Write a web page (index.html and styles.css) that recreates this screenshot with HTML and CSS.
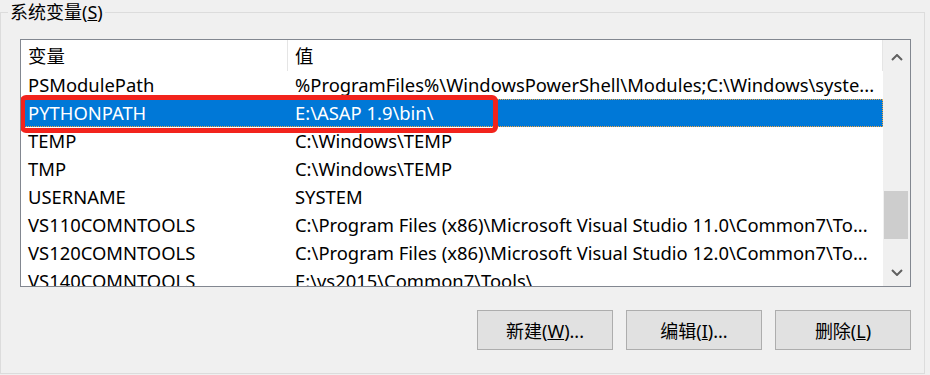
FILE: index.html
```html
<!DOCTYPE html>
<html lang="zh-CN">
<head>
  <meta charset="UTF-8">
  <meta name="viewport" content="width=device-width, initial-scale=1.0">
  <title>系统变量</title>
  <link rel="stylesheet" href="styles.css">
</head>
<body>
  <fieldset class="group">
    <legend>系统变量(<u>S</u>)</legend>

    <div class="list">
      <div class="table">
        <div class="head">
          <div class="hcell name">变量</div>
          <div class="hcell value">值</div>
        </div>
        <div class="row">
          <div class="cell">PSModulePath</div>
          <div class="cell val">%ProgramFiles%\WindowsPowerShell\Modules;C:\Windows\syste...</div>
        </div>
        <div class="row selected">
          <div class="cell">PYTHONPATH</div>
          <div class="cell val">E:\ASAP 1.9\bin\</div>
          <div class="mark"></div>
        </div>
        <div class="row">
          <div class="cell">TEMP</div>
          <div class="cell val">C:\Windows\TEMP</div>
        </div>
        <div class="row">
          <div class="cell">TMP</div>
          <div class="cell val">C:\Windows\TEMP</div>
        </div>
        <div class="row">
          <div class="cell">USERNAME</div>
          <div class="cell val">SYSTEM</div>
        </div>
        <div class="row">
          <div class="cell">VS110COMNTOOLS</div>
          <div class="cell val">C:\Program Files (x86)\Microsoft Visual Studio 11.0\Common7\To...</div>
        </div>
        <div class="row">
          <div class="cell">VS120COMNTOOLS</div>
          <div class="cell val">C:\Program Files (x86)\Microsoft Visual Studio 12.0\Common7\To...</div>
        </div>
        <div class="row">
          <div class="cell">VS140COMNTOOLS</div>
          <div class="cell val">E:\vs2015\Common7\Tools\</div>
        </div>
      </div>

      <div class="scrollbar">
        <div class="sb-btn up">
          <svg width="12" height="7" viewBox="0 0 12 7"><polyline points="1,6 6,1 11,6" fill="none" stroke="#606060" stroke-width="2"/></svg>
        </div>
        <div class="sb-track">
          <div class="sb-thumb"></div>
        </div>
        <div class="sb-btn down">
          <svg width="12" height="7" viewBox="0 0 12 7"><polyline points="1,1 6,6 11,1" fill="none" stroke="#606060" stroke-width="2"/></svg>
        </div>
      </div>
    </div>

    <div class="actions">
      <button>新建(<u>W</u>)...</button>
      <button>编辑(<u>I</u>)...</button>
      <button>删除(<u>L</u>)</button>
    </div>
  </fieldset>
</body>
</html>
```

FILE: styles.css
```css
body { margin: 0; width: 930px; height: 375px; overflow: hidden; background: #f0f0f0; color: #000; font-family: "Noto Sans", "Noto Sans CJK SC", sans-serif; font-size: 18px; }

.group { margin: 0; width: 891px; padding: 15px 13px 23px 19px; border: 1px solid #dcdcdc; }
.group legend { margin-left: -12px; padding: 0 2px; line-height: 24px; }

.list { display: grid; grid-template-columns: 862px 27px; height: 248px; box-sizing: border-box; border: 1px solid #828790; background: #fff; font-size: 18.4px; }

.table { height: 246px; overflow: hidden; }
.head { display: grid; grid-template-columns: 267px 595px; height: 31px; }
.hcell { box-sizing: border-box; padding-left: 7px; line-height: 31px; border-right: 1px solid #e5e5e5; }

.row { display: grid; grid-template-columns: 267px 595px; height: 28px; line-height: 28px; position: relative; }
.cell { padding-left: 7px; white-space: nowrap; overflow: hidden; text-overflow: ellipsis; }
.cell.val { padding-right: 8px; }
.row.selected { background: #0078d7; color: #fff; outline: 1px dotted #f5a742; outline-offset: -1px; }

.mark { position: absolute; left: -1px; top: -4px; width: 478px; height: 38px; box-sizing: border-box; border: 5px solid #f2231c; border-radius: 6px; }

.scrollbar { display: flex; flex-direction: column; height: 246px; background: #f0f0f0; }
.sb-btn { display: flex; align-items: center; justify-content: center; }
.sb-btn.up { height: 34px; }
.sb-btn.down { height: 28px; }
.sb-track { flex: 1; padding-top: 117px; }
.sb-thumb { height: 48px; margin: 0 2px 0 1px; background: #cdcdcd; }

.actions { display: flex; justify-content: flex-end; gap: 13px; margin-top: 23px; }
.actions button { width: 136px; height: 40px; padding: 0; border: 1px solid #adadad; background: #e1e1e1; color: #000; font-family: inherit; font-size: 18px; }
```
